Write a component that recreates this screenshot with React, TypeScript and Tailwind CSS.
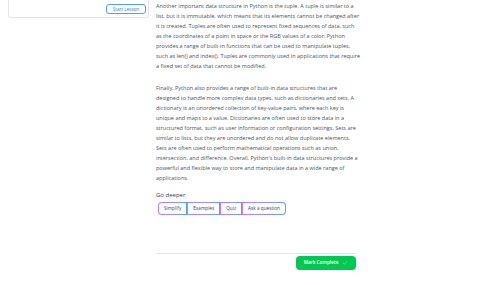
import { Check } from "lucide-react";

// 参照画像と同じ位置で折り返すため行ごとに保持
const paragraphs = [
  [
    "Another important data structure in Python is the tuple. A tuple is similar to a",
    "list, but it is immutable, which means that its elements cannot be changed after",
    "it is created. Tuples are often used to represent fixed sequences of data, such",
    "as the coordinates of a point in space or the RGB values of a color. Python",
    "provides a range of built-in functions that can be used to manipulate tuples,",
    "such as len() and index(). Tuples are commonly used in applications that require",
    "a fixed set of data that cannot be modified.",
  ],
  [
    "Finally, Python also provides a range of built-in data structures that are",
    "designed to handle more complex data types, such as dictionaries and sets. A",
    "dictionary is an unordered collection of key-value pairs, where each key is",
    "unique and maps to a value. Dictionaries are often used to store data in a",
    "structured format, such as user information or configuration settings. Sets are",
    "similar to lists, but they are unordered and do not allow duplicate elements.",
    "Sets are often used to perform mathematical operations such as union,",
    "intersection, and difference. Overall, Python's built-in data structures provide a",
    "powerful and flexible way to store and manipulate data in a wide range of",
    "applications.",
  ],
];

const actions = ["Simplify", "Examples", "Quiz", "Ask a question"];

export default function App() {
  return (
    <div className="flex h-[285px] w-[500px] overflow-hidden bg-white font-['Open_Sans',sans-serif]">
      {/* サイドバー */}
      <aside className="ml-[8px] w-[141px] shrink-0">
        <div className="flex h-[18px] items-start justify-end rounded-b-[3px] border border-t-0 border-gray-200 bg-white pr-[2px] pt-[4px]">
          <button className="flex h-[10px] w-[40px] items-center justify-center rounded-[3px] border border-blue-400 text-[4.6px] font-medium text-blue-500">
            Start Lesson
          </button>
        </div>
      </aside>

      {/* 本文 */}
      <main className="ml-[7px] flex w-[202px] shrink-0 flex-col pt-[1px]">
        {paragraphs.map((lines, i) => (
          <p
            key={i}
            className="mb-[12px] whitespace-nowrap text-[5.5px] leading-[10px] text-gray-600"
          >
            {lines.map((line) => (
              <span key={line} className="block">
                {line}
              </span>
            ))}
          </p>
        ))}

        <h3 className="-mt-[5px] text-[6px] leading-[10px] text-gray-700">
          Go deeper
        </h3>

        <div className="mt-[2px] ml-[2px] flex">
          {actions.map((label, i) => (
            <div
              key={label}
              className={`bg-gradient-to-r from-purple-400 to-blue-400 p-px ${
                i === 0 ? "rounded-l-[4px]" : ""
              } ${i === actions.length - 1 ? "rounded-r-[4px]" : ""}`}
            >
              <button
                className={`flex h-[11px] items-center bg-white px-[5px] text-[4.7px] text-gray-700 ${
                  i === 0 ? "rounded-l-[3px]" : ""
                } ${i === actions.length - 1 ? "rounded-r-[3px]" : ""}`}
              >
                {label}
              </button>
            </div>
          ))}
        </div>

        <div className="mt-[38px] h-px w-[200px] bg-gray-200" />

        <div className="mt-[2px] flex w-[200px] justify-end">
          <button className="flex h-[14px] w-[60px] items-center justify-center gap-[4px] rounded-[4px] bg-green-500 text-[4.7px] font-semibold text-white">
            Mark Complete
            <Check className="h-[6px] w-[6px]" strokeWidth={1.5} />
          </button>
        </div>
      </main>
    </div>
  );
}
